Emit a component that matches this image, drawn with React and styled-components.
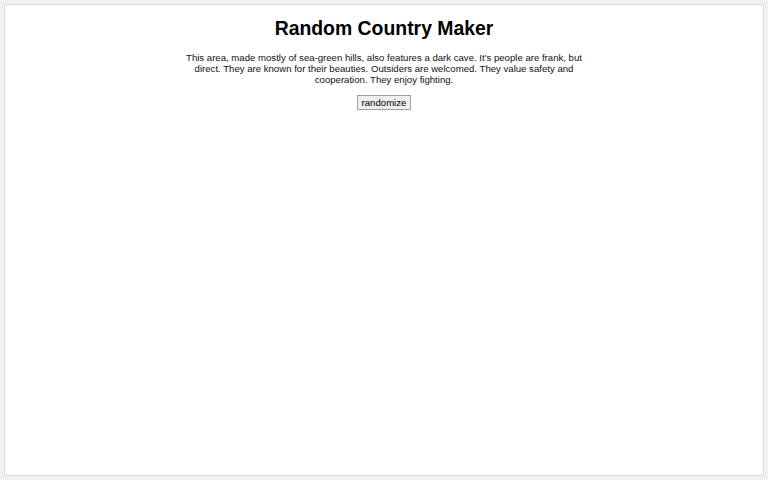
import React, { useState } from "react";
import styled, { createGlobalStyle } from "styled-components";

const GlobalStyle = createGlobalStyle`
  html, body {
    margin: 0;
    padding: 0;
    height: 100%;
    background: #f1f1f1;
    font-family: "Liberation Sans", Arial, sans-serif;
  }
  #root {
    height: 100%;
  }
`;

const Page = styled.div`
  box-sizing: border-box;
  height: 100%;
  padding: 4px;
`;

const Panel = styled.main`
  box-sizing: border-box;
  height: 100%;
  background: #fff;
  border: 1px solid #dcdcdc;
  display: flex;
  flex-direction: column;
  align-items: center;
  padding-top: 12px;
`;

const Title = styled.h1`
  margin: 0;
  font-size: 19.4px;
  line-height: 22px;
  font-weight: bold;
  color: #000;
`;

const Description = styled.p`
  margin: 13px 0 0;
  width: 400px;
  font-size: 9.6px;
  line-height: 11px;
  text-align: center;
  color: #111;
`;

const Button = styled.button`
  margin-top: 10px;
  font-family: "Liberation Sans", Arial, sans-serif;
  font-size: 9.6px;
  line-height: 11px;
  padding: 1px 4px;
  color: #000;
  background: #efefef;
  border: 1px solid #a0a0a0;
  border-radius: 0;
`;

const countries = [
  "This area, made mostly of sea-green hills, also features a dark cave. It's people are frank, but direct. They are known for their beauties. Outsiders are welcomed. They value safety and cooperation. They enjoy fighting.",
];

export default function App() {
  const [text] = useState(countries[0]);
  return (
    <>
      <GlobalStyle />
      <Page>
        <Panel>
          <Title>Random Country Maker</Title>
          <Description>{text}</Description>
          <Button>randomize</Button>
        </Panel>
      </Page>
    </>
  );
}
